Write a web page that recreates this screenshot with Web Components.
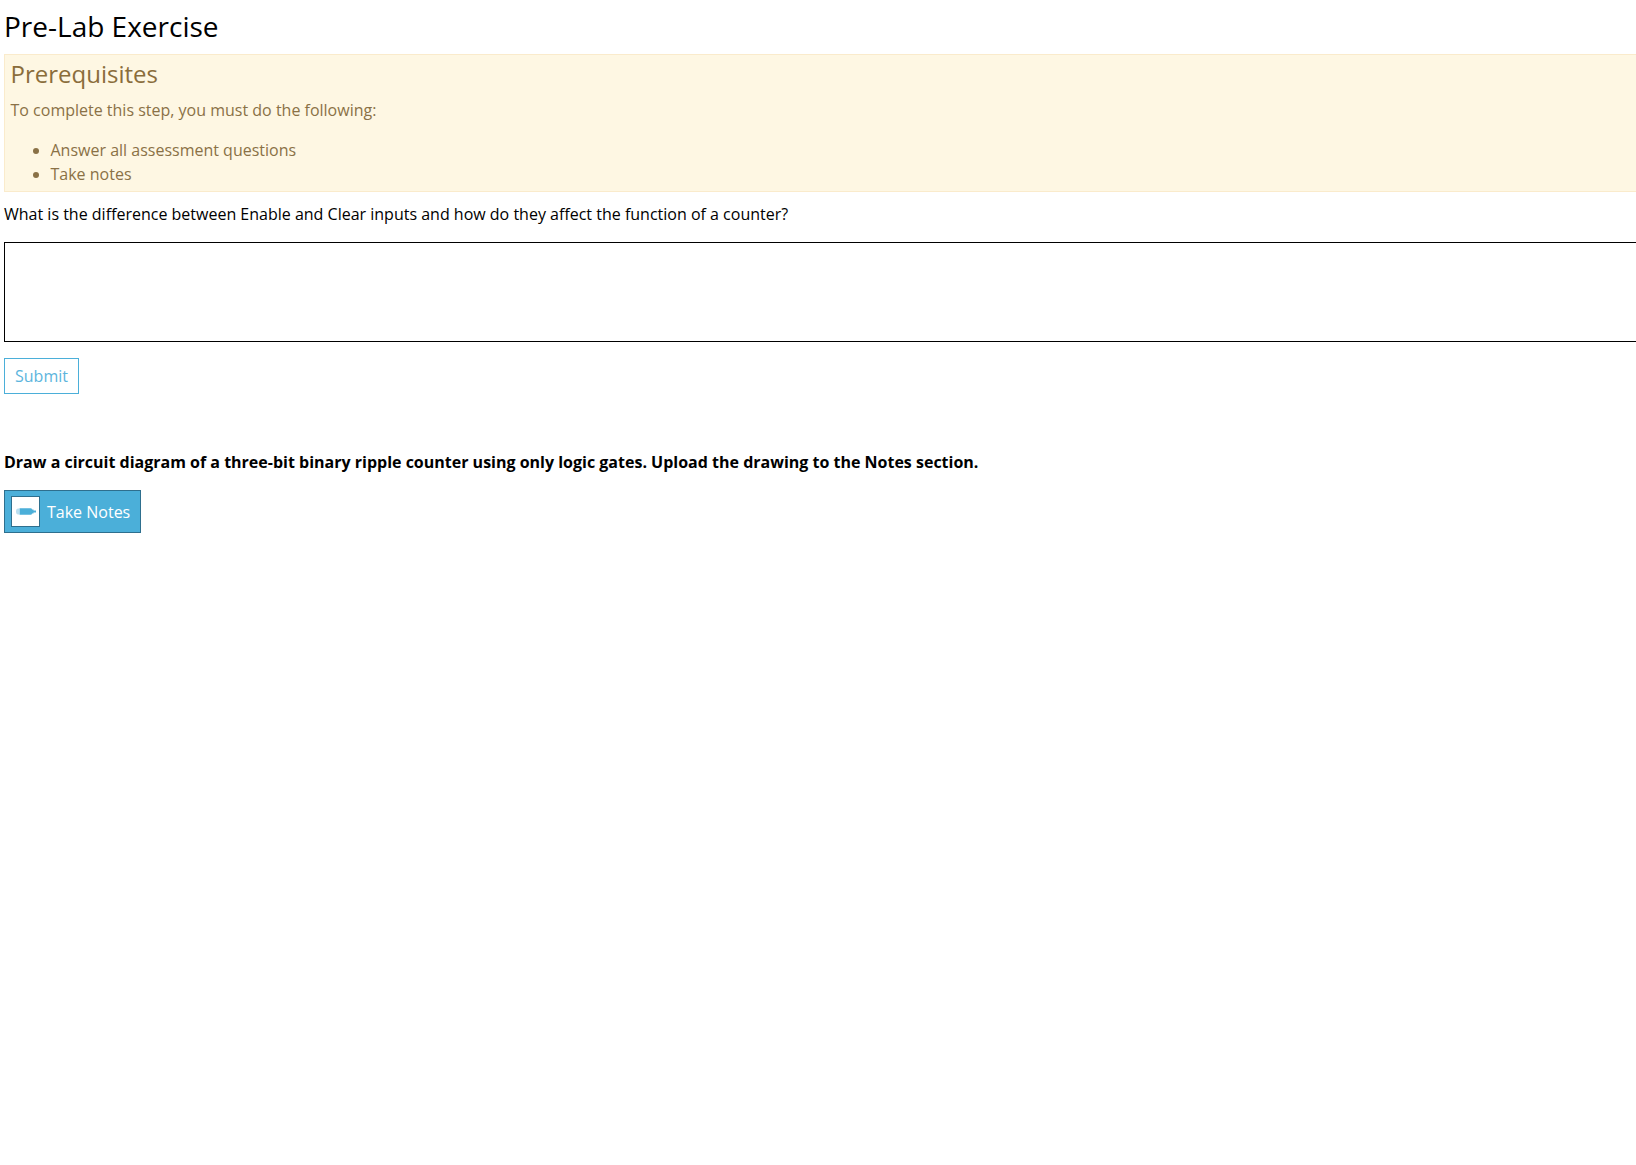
<!DOCTYPE html>
<html lang="en">
<head>
<meta charset="utf-8">
<title>Pre-Lab Exercise</title>
<style>
  html, body { margin: 0; overflow: hidden; background: #fff; }
  body { padding-left: 4px; font: 16px/24px "Open Sans", "Liberation Sans", sans-serif; color: #000; }
</style>
</head>
<body>
<page-title>Pre-Lab Exercise</page-title>
<prereq-box heading="Prerequisites" lead="To complete this step, you must do the following:">
  <li>Answer all assessment questions</li>
  <li>Take notes</li>
</prereq-box>
<question-form question="What is the difference between Enable and Clear inputs and how do they affect the function of a counter?"></question-form>
<notes-task>Draw a circuit diagram of a three-bit binary ripple counter using only logic gates. Upload the drawing to the Notes section.</notes-task>

<script>
class PageTitle extends HTMLElement {
  constructor() {
    super();
    this.attachShadow({ mode: 'open' }).innerHTML = `
      <style>
        :host { display: block; height: 54px; box-sizing: border-box; padding-top: 7px; }
        h1 { margin: 0; font-size: 28px; line-height: 38px; font-weight: 400; }
      </style>
      <h1><slot></slot></h1>`;
  }
}

class PrereqBox extends HTMLElement {
  constructor() {
    super();
    const heading = this.getAttribute('heading');
    const lead = this.getAttribute('lead');
    this.attachShadow({ mode: 'open' }).innerHTML = `
      <style>
        :host {
          display: block;
          box-sizing: border-box;
          width: calc(100% + 40px);
          height: 138px;
          padding: 2px 5.5px 0;
          background: #fef7e3;
          border: 1px solid #faebcc;
          color: #8a7146;
        }
        h2 { margin: 0; font-size: 24px; line-height: 33px; font-weight: 400; color: #8a6d3b; }
        p { margin: 8px 0 0; }
        ul { margin: 16px 0 0; padding-left: 40px; }
      </style>
      <h2>${heading}</h2>
      <p>${lead}</p>
      <ul><slot></slot></ul>`;
  }
}

class QuestionForm extends HTMLElement {
  constructor() {
    super();
    const question = this.getAttribute('question');
    this.attachShadow({ mode: 'open' }).innerHTML = `
      <style>
        :host { display: block; padding-top: 10px; }
        p { margin: 0; }
        textarea {
          display: block;
          box-sizing: border-box;
          width: calc(100% + 40px);
          height: 100px;
          margin-top: 16px;
          border: 1px solid #000;
          border-radius: 0;
          outline: 0;
          resize: none;
        }
        button {
          display: block;
          margin-top: 16px;
          box-sizing: border-box;
          width: 75px;
          height: 36px;
          padding: 0;
          background: #fff;
          border: 1px solid #4bafd9;
          color: #5cb5dd;
          font: inherit;
        }
      </style>
      <p>${question}</p>
      <textarea></textarea>
      <button type="button">Submit</button>`;
  }
}

class NotesTask extends HTMLElement {
  constructor() {
    super();
    this.attachShadow({ mode: 'open' }).innerHTML = `
      <style>
        :host { display: block; padding-top: 56px; }
        p { margin: 0; font-weight: 700; }
        button {
          display: flex;
          align-items: center;
          gap: 6px;
          margin-top: 16px;
          box-sizing: border-box;
          width: 137px;
          height: 43px;
          padding: 0 0 0 6px;
          background: #4bafd9;
          border: 1px solid #2e6f8e;
          color: #fff;
          font: inherit;
        }
        .icon {
          display: flex;
          align-items: center;
          justify-content: center;
          box-sizing: border-box;
          width: 29px;
          height: 31px;
          margin-right: 1px;
          background: #fff;
          border: 1px solid #2e6f8e;
        }
      </style>
      <p><slot></slot></p>
      <button type="button">
        <span class="icon">
          <svg width="20" height="7" viewBox="0 0 20 7">
            <path fill="#b9def0" d="M2 .5h1v6H2Q0 6.500 0 3.500T2 .5z"/>
            <path fill="#4bafd9" d="M3.500 .2h11q1.500 0 1.500 1.300h1.500v1h2.500v2h-2.500v1H16q0 1.300-1.500 1.300h-11z"/>
          </svg>
        </span>
        Take Notes
      </button>`;
  }
}

customElements.define('page-title', PageTitle);
customElements.define('prereq-box', PrereqBox);
customElements.define('question-form', QuestionForm);
customElements.define('notes-task', NotesTask);
</script>
</body>
</html>
